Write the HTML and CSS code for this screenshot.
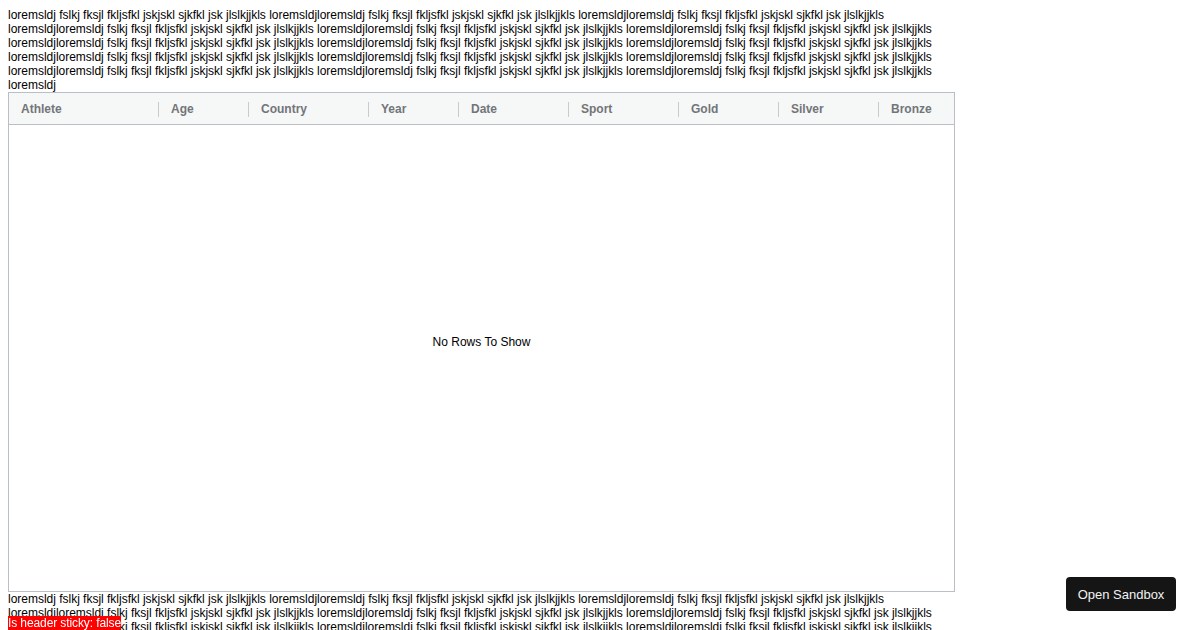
FILE: index.html
```html
<!DOCTYPE html>
<html>
<head>
<meta charset="utf-8">
<link rel="stylesheet" href="styles.css">
</head>
<body>
<div class="page">
  <p class="filler">loremsldj fslkj fksjl fkljsfkl jskjskl sjkfkl jsk jlslkjjkls loremsldjloremsldj fslkj fksjl fkljsfkl jskjskl sjkfkl jsk jlslkjjkls loremsldjloremsldj fslkj fksjl fkljsfkl jskjskl sjkfkl jsk jlslkjjkls loremsldjloremsldj fslkj fksjl fkljsfkl jskjskl sjkfkl jsk jlslkjjkls loremsldjloremsldj fslkj fksjl fkljsfkl jskjskl sjkfkl jsk jlslkjjkls loremsldjloremsldj fslkj fksjl fkljsfkl jskjskl sjkfkl jsk jlslkjjkls loremsldjloremsldj fslkj fksjl fkljsfkl jskjskl sjkfkl jsk jlslkjjkls loremsldjloremsldj fslkj fksjl fkljsfkl jskjskl sjkfkl jsk jlslkjjkls loremsldjloremsldj fslkj fksjl fkljsfkl jskjskl sjkfkl jsk jlslkjjkls loremsldjloremsldj fslkj fksjl fkljsfkl jskjskl sjkfkl jsk jlslkjjkls loremsldjloremsldj fslkj fksjl fkljsfkl jskjskl sjkfkl jsk jlslkjjkls loremsldjloremsldj fslkj fksjl fkljsfkl jskjskl sjkfkl jsk jlslkjjkls loremsldjloremsldj fslkj fksjl fkljsfkl jskjskl sjkfkl jsk jlslkjjkls loremsldjloremsldj fslkj fksjl fkljsfkl jskjskl sjkfkl jsk jlslkjjkls loremsldjloremsldj fslkj fksjl fkljsfkl jskjskl sjkfkl jsk jlslkjjkls loremsldj</p>
  <div class="grid">
    <div class="grid-header">
      <div class="hcell w150">Athlete</div>
      <div class="hcell w90">Age</div>
      <div class="hcell w120">Country</div>
      <div class="hcell w90">Year</div>
      <div class="hcell w110">Date</div>
      <div class="hcell w110">Sport</div>
      <div class="hcell w100">Gold</div>
      <div class="hcell w100">Silver</div>
      <div class="hcell w100 last">Bronze</div>
    </div>
    <div class="grid-body">
      <span class="empty">No Rows To Show</span>
    </div>
  </div>
  <p class="filler">loremsldj fslkj fksjl fkljsfkl jskjskl sjkfkl jsk jlslkjjkls loremsldjloremsldj fslkj fksjl fkljsfkl jskjskl sjkfkl jsk jlslkjjkls loremsldjloremsldj fslkj fksjl fkljsfkl jskjskl sjkfkl jsk jlslkjjkls loremsldjloremsldj fslkj fksjl fkljsfkl jskjskl sjkfkl jsk jlslkjjkls loremsldjloremsldj fslkj fksjl fkljsfkl jskjskl sjkfkl jsk jlslkjjkls loremsldjloremsldj fslkj fksjl fkljsfkl jskjskl sjkfkl jsk jlslkjjkls loremsldjloremsldj fslkj fksjl fkljsfkl jskjskl sjkfkl jsk jlslkjjkls loremsldjloremsldj fslkj fksjl fkljsfkl jskjskl sjkfkl jsk jlslkjjkls loremsldjloremsldj fslkj fksjl fkljsfkl jskjskl sjkfkl jsk jlslkjjkls loremsldjloremsldj fslkj fksjl fkljsfkl jskjskl sjkfkl jsk jlslkjjkls loremsldjloremsldj fslkj fksjl fkljsfkl jskjskl sjkfkl jsk jlslkjjkls loremsldjloremsldj fslkj fksjl fkljsfkl jskjskl sjkfkl jsk jlslkjjkls loremsldjloremsldj fslkj fksjl fkljsfkl jskjskl sjkfkl jsk jlslkjjkls loremsldjloremsldj fslkj fksjl fkljsfkl jskjskl sjkfkl jsk jlslkjjkls loremsldjloremsldj fslkj fksjl fkljsfkl jskjskl sjkfkl jsk jlslkjjkls loremsldj</p>
</div>
<div class="sticky-label">Is header sticky: false</div>
<button class="sandbox-btn">Open Sandbox</button>
</body>
</html>
```
FILE: styles.css
```css
html, body {
  margin: 0;
  padding: 0;
}
body {
  padding: 8px;
  font-family: "Liberation Sans", Arial, sans-serif;
  font-size: 12px;
  line-height: 14px;
  color: #000;
  background: #fff;
  overflow: hidden;
  height: 614px;
}
.page {
  width: 947px;
}
.filler {
  margin: 0;
  letter-spacing: -0.014px;
}
.grid {
  box-sizing: border-box;
  width: 947px;
  height: 500px;
  border: 1px solid #babfc7;
  display: flex;
  flex-direction: column;
}
.grid-header {
  display: flex;
  height: 31px;
  flex: 0 0 31px;
  background: #f6f7f7;
  border-bottom: 1px solid #babfc7;
  overflow: hidden;
}
.hcell {
  box-sizing: border-box;
  flex: 0 0 auto;
  padding-left: 12px;
  display: flex;
  align-items: center;
  font-weight: bold;
  font-size: 12px;
  color: #727579;
  position: relative;
}
.hcell::after {
  content: "";
  position: absolute;
  right: 0;
  top: 9px;
  height: 15px;
  width: 1px;
  background: #c7cbd1;
}
.hcell.last::after {
  display: none;
}
.w150 { width: 150px; }
.w90 { width: 90px; }
.w120 { width: 120px; }
.w110 { width: 110px; }
.w100 { width: 100px; }
.grid-body {
  flex: 1 1 auto;
  display: flex;
  align-items: center;
  justify-content: center;
  padding-bottom: 32px;
}
.empty {
  font-size: 12px;
  color: #000;
}
.sticky-label {
  position: fixed;
  left: 8px;
  bottom: 0;
  height: 14px;
  line-height: 14px;
  background: #ff0000;
  color: #fff;
  font-size: 12px;
  letter-spacing: -0.1px;
}
.sandbox-btn {
  position: fixed;
  right: 24px;
  bottom: 19px;
  width: 110px;
  height: 34px;
  background: #151515;
  color: #f2f2f2;
  border: none;
  border-radius: 4px;
  font-family: "Liberation Sans", Arial, sans-serif;
  font-size: 13px;
  padding: 0;
}
```
